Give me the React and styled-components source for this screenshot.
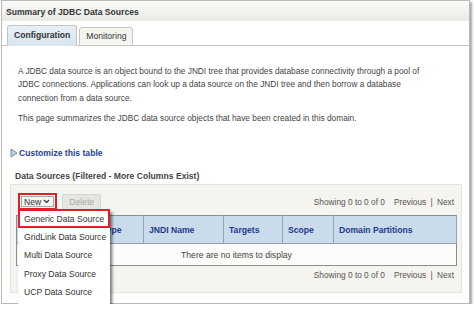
import React from 'react';
import styled, { createGlobalStyle } from 'styled-components';

const GlobalStyle = createGlobalStyle`
  body {
    margin: 0;
    background: #fff;
    font-family: "Liberation Sans", Arial, sans-serif;
    color: #333;
  }
`;

const COLUMNS = [
  { label: 'Name', width: 80 },
  { label: 'Type', width: 47 },
  { label: 'JNDI Name', width: 80 },
  { label: 'Targets', width: 59 },
  { label: 'Scope', width: 51 },
  { label: 'Domain Partitions' },
];

const MENU_ITEMS = [
  'Generic Data Source',
  'GridLink Data Source',
  'Multi Data Source',
  'Proxy Data Source',
  'UCP Data Source',
];

const CustomizeIcon = () => (
  <svg width="8" height="10" viewBox="0 0 8 10">
    <path d="M1 1 L7 5 L1 9 Z" fill="#b9cde3" stroke="#7d8ea6" strokeWidth="1" strokeLinejoin="round" />
  </svg>
);

const Pager = () => (
  <PagerRow>
    <span>Showing 0 to 0 of 0</span>
    <span>
      Previous <Sep>|</Sep> Next
    </span>
  </PagerRow>
);

const App = () => {
  return (
    <>
      <GlobalStyle />
      <Panel>
        <TitleBar>Summary of JDBC Data Sources</TitleBar>
        <TabRow>
          <Tab active>Configuration</Tab>
          <Tab>Monitoring</Tab>
        </TabRow>
        <Description>
          <p>
            A JDBC data source is an object bound to the JNDI tree that provides database connectivity through a pool of
            JDBC connections. Applications can look up a data source on the JNDI tree and then borrow a database
            connection from a data source.
          </p>
          <p>This page summarizes the JDBC data source objects that have been created in this domain.</p>
        </Description>
        <Customize>
          <CustomizeIcon />
          Customize this table
        </Customize>
        <Caption>Data Sources (Filtered - More Columns Exist)</Caption>
        <TableBox>
          <Toolbar>
            <NewWrap>
              <Highlight>
                <NewButton>
                  New
                  <svg width="7" height="5" viewBox="0 0 7 5">
                    <path d="M1 1 L3.5 3.5 L6 1" fill="none" stroke="#333" strokeWidth="1.2" />
                  </svg>
                </NewButton>
              </Highlight>
              <Menu>
                {MENU_ITEMS.map((item, i) => (
                  <MenuItem key={item} highlighted={i === 0}>
                    {item}
                  </MenuItem>
                ))}
              </Menu>
            </NewWrap>
            <DeleteButton>Delete</DeleteButton>
            <Pager />
          </Toolbar>
          <Table>
            <colgroup>
              {COLUMNS.map((col) => (
                <col key={col.label} width={col.width} />
              ))}
            </colgroup>
            <thead>
              <tr>
                {COLUMNS.map((col) => (
                  <Th key={col.label}>{col.label}</Th>
                ))}
              </tr>
            </thead>
            <tbody>
              <tr>
                <EmptyCell colSpan={COLUMNS.length}>There are no items to display</EmptyCell>
              </tr>
            </tbody>
          </Table>
          <Pager />
        </TableBox>
      </Panel>
    </>
  );
};

const Panel = styled.div`
  position: relative;
  width: 467px;
  height: 302px;
  margin-left: 1px;
  border: 1px solid #b9b9b9;
  box-shadow: 2px 2px 2px rgba(0, 0, 0, 0.35);
  background: #fff;
`;

const TitleBar = styled.div`
  height: 20px;
  line-height: 22px;
  padding-left: 4px;
  font-size: 8.6px;
  font-weight: bold;
  color: #333;
  background: linear-gradient(#fbfcfa, #e8ebe4);
`;

const TabRow = styled.div`
  display: flex;
  align-items: flex-end;
  gap: 2px;
  height: 23px;
  margin-top: 1px;
  padding-left: 5px;
  border-bottom: 1px solid #c4c4c4;
`;

const Tab = styled.div`
  height: ${(p) => (p.active ? 19 : 17)}px;
  line-height: ${(p) => (p.active ? 19 : 17)}px;
  padding: 0 6px;
  margin-bottom: -1px;
  font-size: 8.6px;
  font-weight: ${(p) => (p.active ? 'bold' : 'normal')};
  color: #333;
  border: 1px solid #c4c4c4;
  border-bottom-color: ${(p) => (p.active ? '#dbe7f1' : '#c4c4c4')};
  border-radius: 3px 3px 0 0;
  background: ${(p) => (p.active ? 'linear-gradient(#e8f0f6, #d8e5ef)' : '#f6f6f1')};
`;

const Description = styled.div`
  width: 420px;
  padding: 19px 0 0 16px;
  font-size: 8.3px;
  line-height: 13.3px;
  color: #444;

  p {
    margin: 0 0 7px;
  }
`;

const Customize = styled.div`
  display: flex;
  align-items: center;
  gap: 1px;
  margin-top: 23px;
  padding-left: 8px;
  font-size: 8.6px;
  font-weight: bold;
  color: #22429a;
`;

const Caption = styled.div`
  margin-top: 13px;
  padding-left: 13px;
  font-size: 8.6px;
  font-weight: bold;
  color: #444;
`;

const TableBox = styled.div`
  margin: 3px 7px 0 8px;
  padding: 8px 4px 9px 5px;
  background: #f5f4ee;
  border: 1px solid #e4e3dc;
`;

const Toolbar = styled.div`
  display: flex;
  align-items: flex-start;
  gap: 5px;
  height: 17px;
  margin-bottom: 5px;
`;

const NewWrap = styled.div`
  position: relative;
  margin-left: 2px;
`;

const Highlight = styled.div`
  padding: 1px;
  border: 2px solid #dd2127;
`;

const NewButton = styled.div`
  display: flex;
  align-items: center;
  gap: 2px;
  height: 9px;
  padding: 0 3px 0 2px;
  font-size: 8.6px;
  color: #333;
  background: #f4f4f2;
  border: 1px solid #a9a9a9;
`;

const DeleteButton = styled.div`
  height: 14px;
  line-height: 14px;
  margin-top: 1px;
  padding: 0 6px;
  font-size: 8.6px;
  color: #a9a9a6;
  background: #e5e5e1;
  border: 1px solid #d6d6d1;
  border-radius: 2px;
`;

const Menu = styled.div`
  position: absolute;
  top: 16px;
  left: 0;
  z-index: 2;
  width: 92px;
  padding-bottom: 3px;
  background: #fff;
  box-shadow: 2px 3px 3px rgba(0, 0, 0, 0.55);
`;

const MenuItem = styled.div`
  height: ${(p) => (p.highlighted ? 15 : 18.2)}px;
  line-height: ${(p) => (p.highlighted ? 16 : 18.2)}px;
  padding-left: ${(p) => (p.highlighted ? 4 : 6)}px;
  font-size: 8.6px;
  color: #333;
  white-space: nowrap;
  border: ${(p) => (p.highlighted ? '2px solid #dd2127' : 'none')};
`;

const PagerRow = styled.div`
  display: flex;
  align-items: center;
  justify-content: flex-end;
  gap: 9px;
  flex: 1;
  height: 17px;
  padding-right: 3px;
  font-size: 8.3px;
  color: #555;
`;

const Sep = styled.span`
  margin: 0 2px;
`;

const Table = styled.table`
  width: 100%;
  table-layout: fixed;
  border-collapse: collapse;
  border: 1px solid #8e8e8e;
`;

const Th = styled.th`
  height: 27px;
  padding: 0 5px;
  text-align: left;
  font-size: 8.6px;
  font-weight: bold;
  color: #22388b;
  background: #cadbeb;
  white-space: nowrap;
  border-right: 1px solid #8fa3ba;
  border-bottom: 1px solid #8fa3ba;
`;

const EmptyCell = styled.td`
  height: 19px;
  text-align: center;
  font-size: 8.6px;
  color: #444;
  background: #fcfcfa;
`;

export default App;
